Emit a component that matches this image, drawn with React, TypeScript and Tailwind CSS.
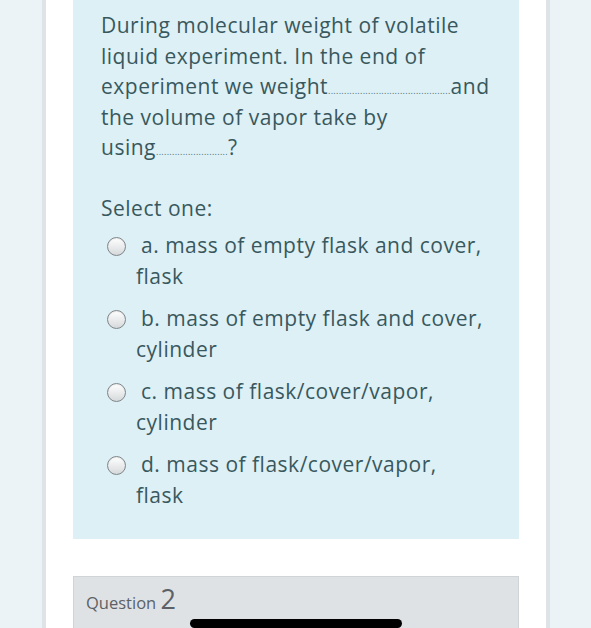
import React from "react";

const options = [
  { key: "a", first: "a. mass of empty flask and cover,", rest: "flask" },
  { key: "b", first: "b. mass of empty flask and cover,", rest: "cylinder" },
  { key: "c", first: "c. mass of flask/cover/vapor,", rest: "cylinder" },
  { key: "d", first: "d. mass of flask/cover/vapor,", rest: "flask" },
];

function Radio() {
  return (
    <span className="inline-block align-[-3px] ml-[-29px] mr-[15px] w-[19px] h-[19px] rounded-full border-[1.5px] border-[#7f8588] bg-gradient-to-b from-[#ffffff] to-[#d6d9db] shadow-[inset_0_1px_1px_rgba(0,0,0,0.08)]" />
  );
}

export default function App() {
  return (
    <div className="w-[591px] h-[628px] overflow-hidden bg-[#ecf3f6] font-['Open_Sans',sans-serif]">
      {/* Card */}
      <div className="ml-[42px] w-[508px] h-full bg-white border-x-[4px] border-[#dde3e6] px-[27px]">
        {/* Question text */}
        <div className="bg-[#ddf0f6] pl-[28px] pr-[2px] pt-[10px] pb-[29px] text-[21px] tracking-[0.5px] leading-[30.5px] text-[#39585d]">
          <p>
            During molecular weight of volatile
            <br />
            liquid experiment. In the end of
            <br />
            experiment we weight
            <span className="text-[9px] leading-none tracking-[0.3px] text-[#4d6a70]">..............................................</span>
            and
            <br />
            the volume of vapor take by
            <br />
            using<span className="text-[9px] leading-none tracking-[0.3px] text-[#4d6a70]">...........................</span>?
          </p>

          <p className="mt-[30px]">Select one:</p>

          <div className="mt-[7px] flex flex-col gap-[12px]">
            {options.map((o) => (
              <p key={o.key} className="pl-[35px]">
                <Radio />
                {o.first}
                <br />
                {o.rest}
              </p>
            ))}
          </div>
        </div>

        {/* Next question header */}
        <div className="mt-[37px] h-[80px] bg-[#dfe2e5] border border-[#d0d4d7] pl-[12px] pt-[2px] text-[#5b6166]">
          <span className="text-[16.5px]">Question </span>
          <span className="text-[27px]">2</span>
        </div>
      </div>

      {/* Home indicator */}
      <div className="relative">
        <div className="absolute left-[190px] top-[-9px] w-[212px] h-[9px] rounded-full bg-black" />
      </div>
    </div>
  );
}
